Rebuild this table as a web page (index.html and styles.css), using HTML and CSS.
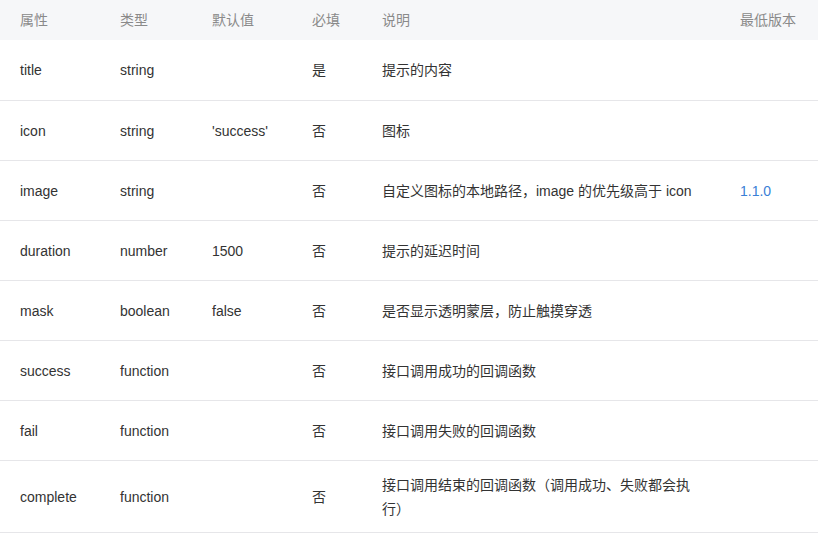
FILE: index.html
```html
<!DOCTYPE html>
<html lang="zh">
<head>
<meta charset="utf-8">
<link rel="stylesheet" href="styles.css">
</head>
<body>
<table class="params">
  <colgroup>
    <col class="c-name"><col class="c-type"><col class="c-default"><col class="c-req"><col class="c-desc"><col class="c-ver">
  </colgroup>
  <thead>
    <tr><th>属性</th><th>类型</th><th>默认值</th><th>必填</th><th>说明</th><th>最低版本</th></tr>
  </thead>
  <tbody>
    <tr><td>title</td><td>string</td><td></td><td>是</td><td>提示的内容</td><td></td></tr>
    <tr><td>icon</td><td>string</td><td>'success'</td><td>否</td><td>图标</td><td></td></tr>
    <tr><td>image</td><td>string</td><td></td><td>否</td><td>自定义图标的本地路径，image 的优先级高于 icon</td><td><a class="ver" href="#">1.1.0</a></td></tr>
    <tr><td>duration</td><td>number</td><td>1500</td><td>否</td><td>提示的延迟时间</td><td></td></tr>
    <tr><td>mask</td><td>boolean</td><td>false</td><td>否</td><td>是否显示透明蒙层，防止触摸穿透</td><td></td></tr>
    <tr><td>success</td><td>function</td><td></td><td>否</td><td>接口调用成功的回调函数</td><td></td></tr>
    <tr><td>fail</td><td>function</td><td></td><td>否</td><td>接口调用失败的回调函数</td><td></td></tr>
    <tr><td>complete</td><td>function</td><td></td><td>否</td><td>接口调用结束的回调函数（调用成功、失败都会执行）</td><td></td></tr>
  </tbody>
</table>
</body>
</html>
```
FILE: styles.css
```css
html, body {
  margin: 0;
  padding: 0;
  background: #ffffff;
}
body {
  font-family: "Liberation Sans", "Noto Sans CJK SC", sans-serif;
  font-size: 14px;
  color: #333333;
}
.params {
  width: 818px;
  border-collapse: collapse;
  table-layout: fixed;
}
.c-name { width: 100px; }
.c-type { width: 92px; }
.c-default { width: 100px; }
.c-req { width: 70px; }
.c-desc { width: 358px; }
.c-ver { width: 98px; }
.params th {
  background: #f6f7f9;
  color: #8a8a8a;
  font-weight: normal;
  text-align: left;
  height: 40px;
  padding: 0 0 0 20px;
  line-height: 40px;
  vertical-align: middle;
}
.params th:last-child,
.params td:last-child {
  padding-right: 20px;
}
.params td {
  height: 60px;
  padding: 12px 0 11px 20px;
  box-sizing: border-box;
  line-height: 24px;
  vertical-align: middle;
  border-bottom: 1px solid #e6e6e9;
}
.params td:nth-child(5) {
  padding-right: 20px;
}
.ver {
  color: #3a7fd6;
  text-decoration: none;
}
```
